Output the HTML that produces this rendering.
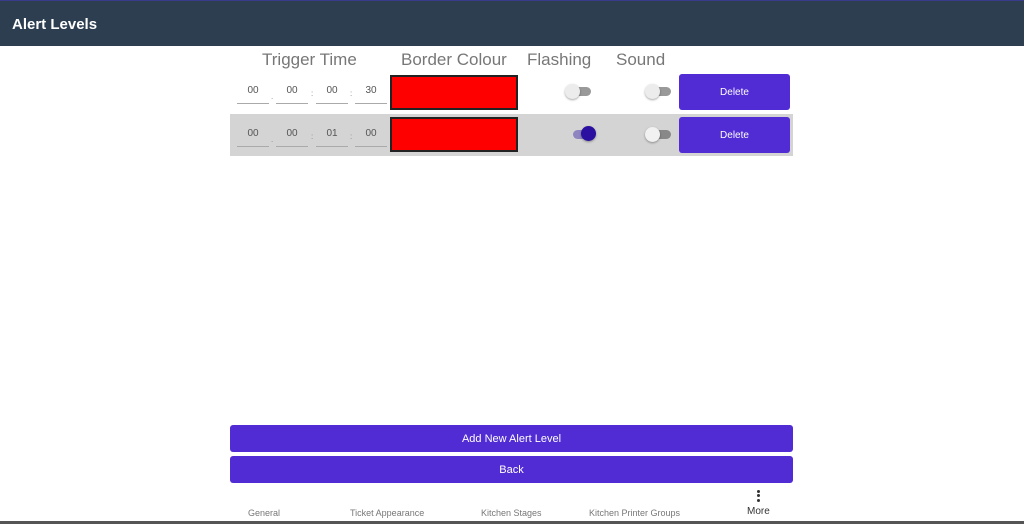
<!DOCTYPE html>
<html><head><meta charset="utf-8"><style>
*{margin:0;padding:0;box-sizing:border-box}
body{width:1024px;height:524px;position:relative;background:#fff;font-family:"Liberation Sans",sans-serif;overflow:hidden}
.hdr{position:absolute;left:0;top:0;width:1024px;height:46px;background:#2c3e50;border-top:1px solid #3a3a8a}
.hdr span{position:absolute;left:12px;top:15px;color:#fff;font-size:15px;font-weight:bold}
.ab{position:absolute}
.h{position:absolute;top:50px;font-size:17px;color:#777}
.row2{position:absolute;left:230px;top:114px;width:563px;height:42px;background:#d4d4d4}
.tf{position:absolute;width:32px;border-bottom:1px solid #aaa;height:22px;text-align:center;font-size:10px;color:#555;line-height:14px;padding-top:2px}
.sep{position:absolute;font-size:8px;color:#888}
.red{position:absolute;left:390px;width:128px;height:35px;background:#f00;border:2px solid #222}
.tr{position:absolute;width:16px;height:9px;border-radius:5px}
.th{position:absolute;width:15px;height:15px;border-radius:50%;box-shadow:0 1px 2px rgba(0,0,0,.35)}
.del{position:absolute;left:679px;width:111px;height:36px;background:#512bd4;border-radius:3px;color:#fff;font-size:10px;text-align:center;line-height:38px}
.btn{position:absolute;left:230px;width:563px;height:27px;background:#512bd4;border-radius:3px;color:#fff;font-size:11px;text-align:center;line-height:29px}
.nav{position:absolute;top:508px;font-size:9px;color:#777}
</style></head><body>
<div class="hdr"><span>Alert Levels</span></div>
<div class="h" style="left:262px">Trigger Time</div>
<div class="h" style="left:401px">Border Colour</div>
<div class="h" style="left:527px">Flashing</div>
<div class="h" style="left:616px">Sound</div>
<div class="row2"></div>

<div class="tf" style="left:237px;top:82px">00</div>
<div class="tf" style="left:276px;top:82px">00</div>
<div class="tf" style="left:316px;top:82px">00</div>
<div class="tf" style="left:355px;top:82px">30</div>
<div class="sep" style="left:271px;top:92px">.</div>
<div class="sep" style="left:311px;top:89px">:</div>
<div class="sep" style="left:350px;top:89px">:</div>
<div class="red" style="top:75px"></div>
<div class="tr" style="left:575px;top:87px;background:#999"></div>
<div class="th" style="left:565px;top:84px;background:#ececec"></div>
<div class="tr" style="left:655px;top:87px;background:#999"></div>
<div class="th" style="left:645px;top:84px;background:#ececec"></div>
<div class="del" style="top:74px">Delete</div>

<div class="tf" style="left:237px;top:125px">00</div>
<div class="tf" style="left:276px;top:125px">00</div>
<div class="tf" style="left:316px;top:125px">01</div>
<div class="tf" style="left:355px;top:125px">00</div>
<div class="sep" style="left:271px;top:135px">.</div>
<div class="sep" style="left:311px;top:132px">:</div>
<div class="sep" style="left:350px;top:132px">:</div>
<div class="red" style="top:117px"></div>
<div class="tr" style="left:573px;top:130px;background:#8f86c0"></div>
<div class="th" style="left:581px;top:126px;background:#2a0fa0"></div>
<div class="tr" style="left:655px;top:130px;background:#888"></div>
<div class="th" style="left:645px;top:127px;background:#f1f1f1"></div>
<div class="del" style="top:117px">Delete</div>

<div class="btn" style="top:425px">Add New Alert Level</div>
<div class="btn" style="top:456px">Back</div>

<div class="nav" style="left:248px">General</div>
<div class="nav" style="left:350px">Ticket Appearance</div>
<div class="nav" style="left:481px">Kitchen Stages</div>
<div class="nav" style="left:589px">Kitchen Printer Groups</div>
<div class="ab" style="left:757px;top:490px;width:3px;height:3px;border-radius:50%;background:#333"></div>
<div class="ab" style="left:757px;top:494px;width:3px;height:3px;border-radius:50%;background:#333"></div>
<div class="ab" style="left:757px;top:499px;width:3px;height:3px;border-radius:50%;background:#333"></div>
<div class="nav" style="left:747px;top:506px;font-size:10px;color:#333">More</div>
<div class="ab" style="left:0;top:521px;width:1024px;height:3px;background:#555"></div>
</body></html>
